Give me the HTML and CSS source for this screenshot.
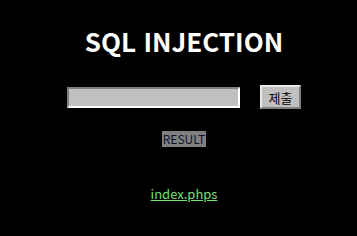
FILE: index.html
```html
<!DOCTYPE html>
<html lang="ko">
<head>
    <meta charset="UTF-8">
    <title>SQL INJECTION</title>
    <link rel="stylesheet" href="styles.css">
</head>
<body>
    <div class="page">
        <h1 class="title">SQL INJECTION</h1>
        <form class="query-form">
            <input type="text" name="query" class="query-input">
            <button type="submit" class="submit-btn">제출</button>
        </form>
        <div class="result">RESULT</div>
        <a href="index.phps" class="source-link">index.phps</a>
    </div>
</body>
</html>
```

FILE: styles.css
```css
* {
    box-sizing: border-box;
    margin: 0;
    padding: 0;
}

body {
    background: black;
    color: white;
    font-family: "Noto Sans CJK KR", "Noto Sans", sans-serif;
}

.page {
    display: flex;
    flex-direction: column;
    align-items: center;
    padding-left: 11px;
    padding-top: 23px;
}

.title {
    font-size: 26px;
    font-weight: bold;
    line-height: 36px;
    height: 36px;
}

.query-form {
    display: flex;
    align-items: center;
    gap: 20px;
    margin-top: 26px;
}

.query-input {
    width: 173px;
    height: 21px;
    background: #c0c0c0;
    border: 2px solid;
    border-color: #808080 #ffffff #ffffff #808080;
    outline: none;
}

.submit-btn {
    width: 41px;
    height: 24px;
    background: #c0c0c0;
    border: 2px solid;
    border-color: #e8e8e8 #808080 #808080 #e8e8e8;
    font-family: "Noto Sans CJK KR", sans-serif;
    font-size: 13px;
    color: black;
}

.result {
    margin-top: 22px;
    background: #808080;
    color: #0c1430;
    font-size: 12px;
    line-height: 16px;
    padding: 0 1px;
}

.source-link {
    margin-top: 37px;
    color: #70e070;
    font-size: 13px;
}
```
